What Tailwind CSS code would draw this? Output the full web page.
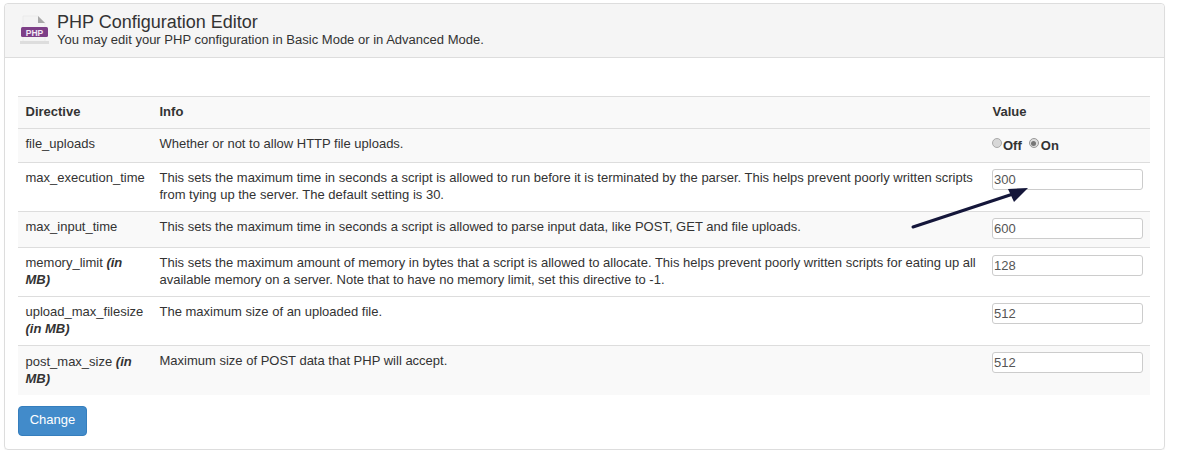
<!DOCTYPE html>
<html lang="en">
<head>
    <meta charset="UTF-8">
    <title>PHP Configuration Editor</title>
    <script src="https://cdn.jsdelivr.net/npm/@tailwindcss/browser@4"></script>
</head>
<body class="bg-white font-['Liberation_Sans',Arial,sans-serif] text-[13px] leading-[17px] text-[#333]">
    <div class="relative mt-[3px] ml-1 w-[1161px] h-[447px] border border-[#ddd] rounded-[4px] shadow-[0_1px_1px_rgba(0,0,0,0.05)]">
        <!-- heading -->
        <div class="flex items-center h-[54px] pl-[14px] bg-[#f5f5f5] border-b border-[#ddd] rounded-t-[4px]">
            <svg width="32" height="32" viewBox="0 0 32 32" class="mr-[6px] shrink-0">
                <path d="M4 1h15l7 7v19H4z" fill="#f3f3f3" stroke="#e2e2e2" stroke-width="0.5"/>
                <path d="M19 1l7 7h-7z" fill="#a8a8a8"/>
                <rect x="2" y="12" width="27" height="10" rx="1.5" fill="#7d3f87"/>
                <text x="15.5" y="20.5" text-anchor="middle" font-size="8.5" font-weight="700" fill="#f3e8f5" font-family="Liberation Sans">PHP</text>
                <rect x="1" y="26" width="29" height="3" fill="#ddd"/>
            </svg>
            <div class="pb-px">
                <h1 class="text-[18px] leading-[20px] text-[#333]">PHP Configuration Editor</h1>
                <p class="text-[13.03px] leading-[16px]">You may edit your PHP configuration in Basic Mode or in Advanced Mode.</p>
            </div>
        </div>

        <div class="px-[13px] pt-[38px]">
            <form>
                <table class="w-[1132px] table-fixed border-collapse border-t border-[#ddd]">
                    <colgroup>
                        <col class="w-[134px]">
                        <col class="w-[833px]">
                        <col class="w-[165px]">
                    </colgroup>
                    <thead>
                        <tr class="h-[32px] border-b border-[#ddd] bg-[#f9f9f9] text-left">
                            <th class="px-[7.5px] pb-[3px] font-bold">Directive</th>
                            <th class="px-[7.5px] pb-[3px] font-bold">Info</th>
                            <th class="px-[7.5px] pb-[3px] font-bold">Value</th>
                        </tr>
                    </thead>
                    <tbody>
                        <tr class="h-[34px] border-b border-[#ddd] align-top bg-[#f9f9f9]">
                            <td class="px-[7.5px] pt-[6px]">file_uploads</td>
                            <td class="px-[7.5px] pt-[6px]">Whether or not to allow HTTP file uploads.</td>
                            <td class="px-[7px] pt-[8px]">
                                <div class="flex items-start font-bold">
                                    <span class="mt-[1px] w-[10px] h-[10px] rounded-full border border-[#aaa] bg-[#d8d8d8] mr-px"></span>
                                    <span class="mr-[7px]">Off</span>
                                    <span class="mt-[1px] flex items-center justify-center w-[10px] h-[10px] rounded-full border border-[#999] bg-[#dedede] mr-[2px]"><span class="w-[5px] h-[5px] rounded-full bg-[#777]"></span></span>
                                    <span>On</span>
                                </div>
                            </td>
                        </tr>
                        <tr class="h-[49px] border-b border-[#ddd] align-top">
                            <td class="px-[7.5px] pt-[6px]">max_execution_time</td>
                            <td class="px-[7.5px] pt-[6px]">This sets the maximum time in seconds a script is allowed to run before it is terminated by the parser. This helps prevent poorly written scripts from tying up the server. The default setting is 30.</td>
                            <td class="px-[7px] pt-[6px]"><input type="text" value="300" class="block w-[151px] h-[21px] px-px border border-[#ccc] rounded-[3px] bg-white text-[#555] text-[13px]"></td>
                        </tr>
                        <tr class="h-[36px] border-b border-[#ddd] align-top bg-[#f9f9f9]">
                            <td class="px-[7.5px] pt-[6px]">max_input_time</td>
                            <td class="px-[7.5px] pt-[6px]">This sets the maximum time in seconds a script is allowed to parse input data, like POST, GET and file uploads.</td>
                            <td class="px-[7px] pt-[6px]"><input type="text" value="600" class="block w-[151px] h-[21px] px-px border border-[#ccc] rounded-[3px] bg-white text-[#555] text-[13px]"></td>
                        </tr>
                        <tr class="h-[49px] border-b border-[#ddd] align-top">
                            <td class="px-[7.5px] pt-[6px]">memory_limit <em class="font-bold">(in MB)</em></td>
                            <td class="px-[7.5px] pt-[6px]">This sets the maximum amount of memory in bytes that a script is allowed to allocate. This helps prevent poorly written scripts for eating up all available memory on a server. Note that to have no memory limit, set this directive to -1.</td>
                            <td class="px-[7px] pt-[7px]"><input type="text" value="128" class="block w-[151px] h-[21px] px-px border border-[#ccc] rounded-[3px] bg-white text-[#555] text-[13px]"></td>
                        </tr>
                        <tr class="h-[49px] border-b border-[#ddd] align-top">
                            <td class="px-[7.5px] pt-[6px]">upload_max_filesize <em class="font-bold">(in MB)</em></td>
                            <td class="px-[7.5px] pt-[6px]">The maximum size of an uploaded file.</td>
                            <td class="px-[7px] pt-[6px]"><input type="text" value="512" class="block w-[151px] h-[21px] px-px border border-[#ccc] rounded-[3px] bg-white text-[#555] text-[13px]"></td>
                        </tr>
                        <tr class="h-[49px] align-top bg-[#f9f9f9]">
                            <td class="px-[7.5px] pt-[7px]">post_max_size <em class="font-bold">(in MB)</em></td>
                            <td class="px-[7.5px] pt-[6px]">Maximum size of POST data that PHP will accept.</td>
                            <td class="px-[7px] pt-[6px]"><input type="text" value="512" class="block w-[151px] h-[21px] px-px border border-[#ccc] rounded-[3px] bg-white text-[#555] text-[13px]"></td>
                        </tr>
                    </tbody>
                </table>
                <button type="button" class="block mt-[11px] w-[69px] h-[30px] pb-[2px] bg-[#428bca] border border-[#357ebd] rounded-[4px] text-white text-[13px]">Change</button>
            </form>
        </div>

        <!-- annotation arrow -->
        <svg class="absolute left-[903px] top-[175px]" width="130" height="56" viewBox="0 0 130 56">
            <path d="M5 48L105 15" stroke="#14163a" stroke-width="3" stroke-linecap="round"/>
            <path d="M120 9L100 10L106 23z" fill="#14163a"/>
        </svg>
    </div>
</body>
</html>
